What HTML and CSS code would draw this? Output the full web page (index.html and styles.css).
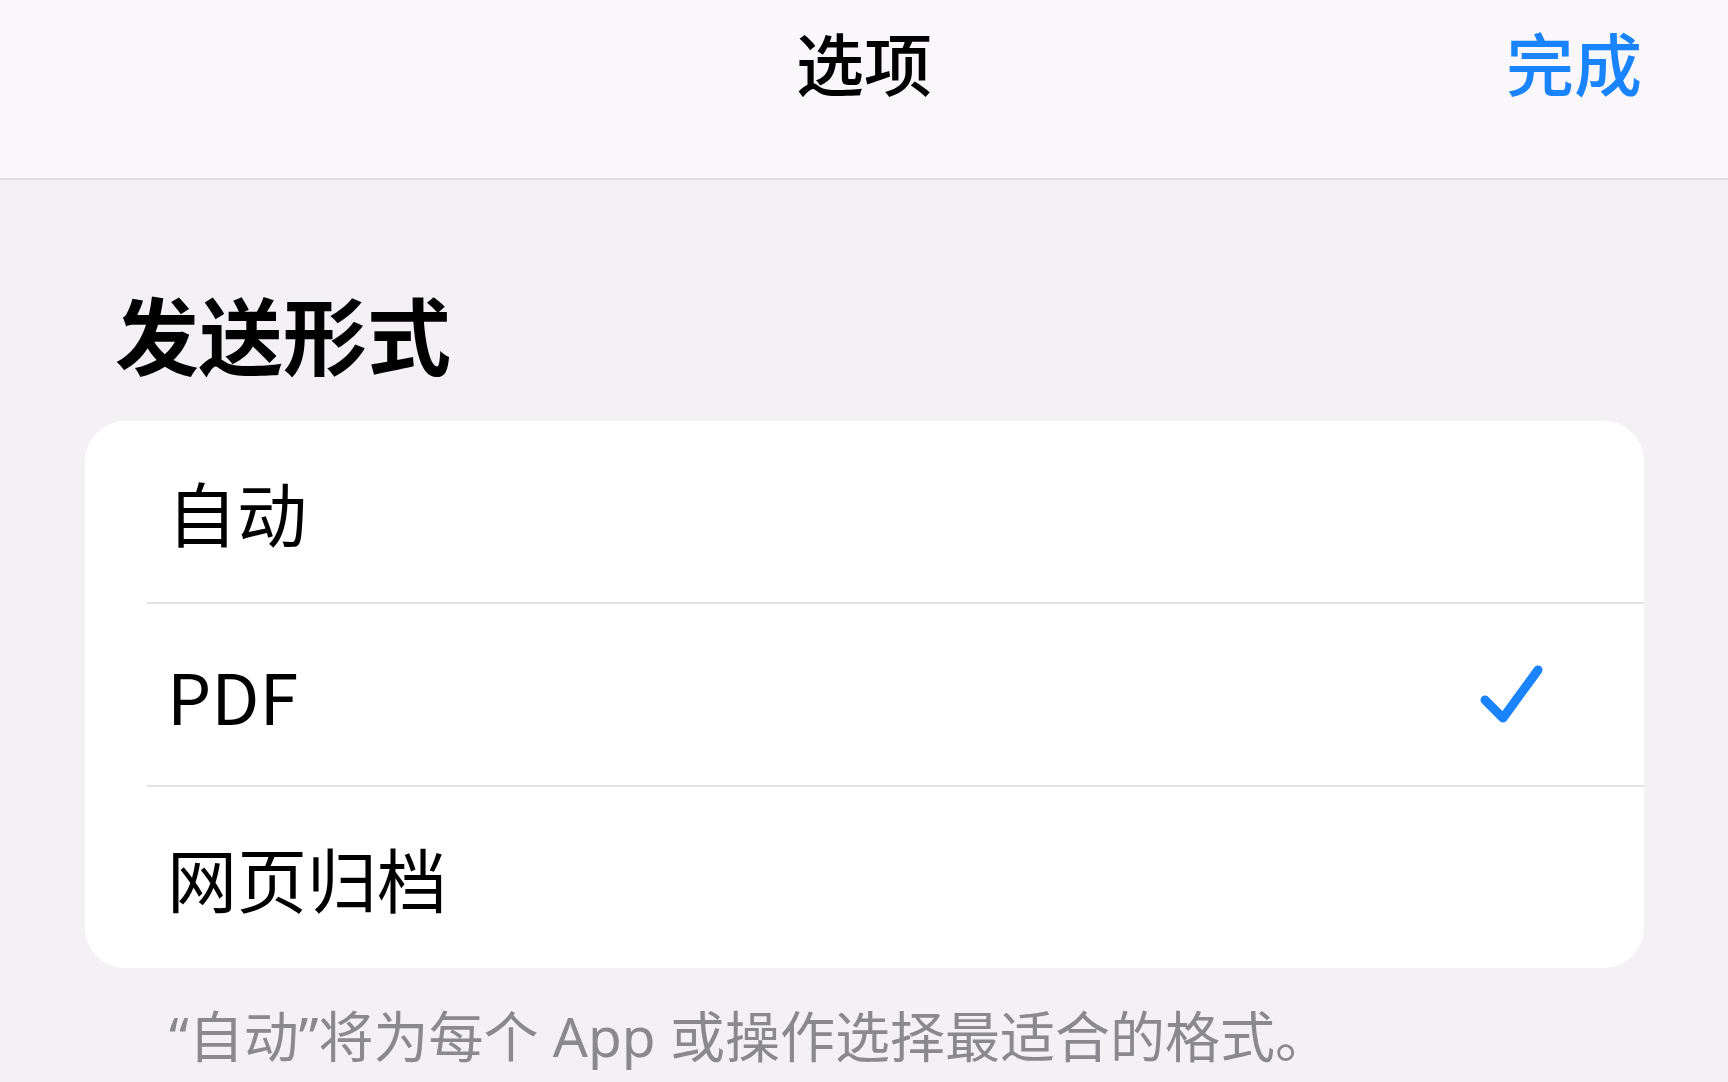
FILE: index.html
```html
<!DOCTYPE html>
<html lang="zh-CN">
<head>
    <meta charset="UTF-8">
    <meta name="viewport" content="width=device-width, initial-scale=1.0">
    <title>选项</title>
    <link rel="stylesheet" href="styles.css">
</head>
<body>
    <header class="navbar">
        <div class="nav-side"></div>
        <h1 class="nav-title">选项</h1>
        <div class="nav-side nav-right">
            <button class="done-btn">完成</button>
        </div>
    </header>

    <main class="content">
        <h2 class="section-title">发送形式</h2>

        <ul class="option-list">
            <li class="option">
                <span class="option-label">自动</span>
            </li>
            <li class="option selected">
                <span class="option-label">PDF</span>
                <svg class="check" viewBox="0 0 64 60" width="64" height="60">
                    <path d="M5 36 L23 54 L58 6" fill="none" stroke="#1a84ff" stroke-width="9" stroke-linecap="round" stroke-linejoin="round"/>
                </svg>
            </li>
            <li class="option">
                <span class="option-label">网页归档</span>
            </li>
        </ul>

        <p class="footnote">“自动”将为每个 App 或操作选择最适合的格式。</p>
    </main>
</body>
</html>
```

FILE: styles.css
```css
body {
    margin: 0;
    height: 100vh;
    overflow: hidden;
    background-color: #f3f1f4;
    font-family: "Noto Sans CJK SC", "Noto Sans", sans-serif;
    color: #000;
}

.navbar {
    display: grid;
    grid-template-columns: 1fr auto 1fr;
    align-items: center;
    height: 178px;
    background-color: #f9f7f9;
    border-bottom: 2px solid #dddcdf;
}

.nav-title {
    margin: 0;
    margin-top: -56px;
    font-size: 68px;
    font-weight: 500;
}

.nav-right {
    display: flex;
    justify-content: flex-end;
    padding-right: 86px;
}

.done-btn {
    margin-top: -56px;
    border: none;
    background: none;
    padding: 0;
    font-family: inherit;
    font-size: 68px;
    font-weight: 500;
    color: #1a84ff;
    cursor: pointer;
}

.content {
    padding: 0 84px 0 85px;
}

.section-title {
    margin: 103px 0 37px 30px;
    font-size: 84px;
    font-weight: 700;
    line-height: 1.2;
}

.option-list {
    list-style: none;
    margin: 0;
    padding: 0;
    background-color: #fff;
    border-radius: 40px;
    overflow: hidden;
}

.option {
    display: flex;
    align-items: center;
    justify-content: space-between;
    height: 181px;
    margin-left: 62px;
    padding-left: 20px;
    padding-right: 100px;
    border-bottom: 2px solid #e2e1e4;
}

.option:last-child {
    border-bottom: none;
}

.option-label {
    font-size: 70px;
    font-weight: 400;
}

.check {
    display: block;
}

.footnote {
    margin: 25px 0 0 84px;
    font-family: "Noto Sans", "Noto Sans CJK SC", sans-serif;
    font-size: 55px;
    color: #8a898e;
}
```
